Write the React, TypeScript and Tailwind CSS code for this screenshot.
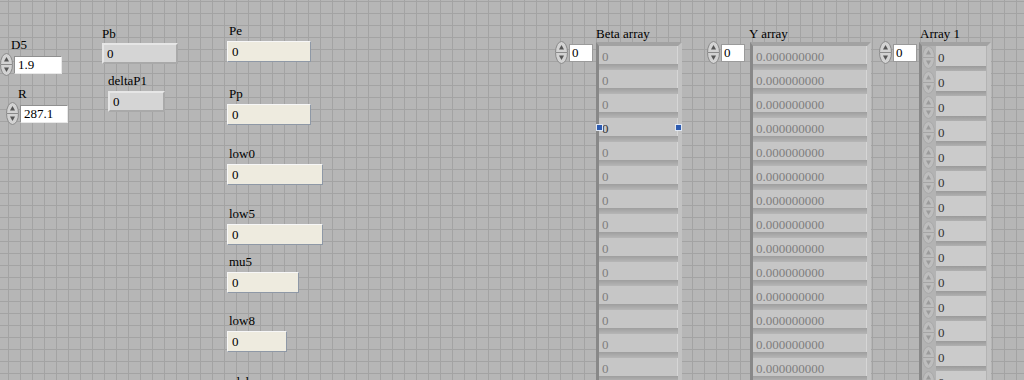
import React from 'react'

const serif = "font-['Liberation_Serif',serif]"

function Spinner({ faded = false }: { faded?: boolean }) {
  const fill = faded ? '#bdbdbd' : '#d2d2d2'
  const tri = faded ? '#9a9a9a' : '#555'
  return (
    <svg width="13" height="23" viewBox="0 0 13 23" className="shrink-0">
      <ellipse cx="6.5" cy="11.5" rx="6" ry="11" fill={fill} stroke={faded ? '#a8a8a8' : '#8a8a8a'} strokeWidth="1" />
      <line x1="1" y1="11.5" x2="12" y2="11.5" stroke={faded ? '#a5a5a5' : '#8a8a8a'} strokeWidth="1" />
      <path d="M6.5 4 L9 8.5 L4 8.5 Z" fill={tri} />
      <path d="M6.5 19 L9 14.5 L4 14.5 Z" fill={tri} />
    </svg>
  )
}

function Label({ text, className = '' }: { text: string; className?: string }) {
  return <div className={`${serif} text-[13px] leading-[14px] text-black ${className}`}>{text}</div>
}

function Control({ value, width }: { value: string; width: string }) {
  return (
    <div className="flex items-center gap-[1px]">
      <Spinner />
      <div className={`${width} h-[18px] bg-white border border-t-[#8f8f8f] border-l-[#8f8f8f] border-b-[#e8e8e8] border-r-[#e8e8e8] ${serif} text-[13px] leading-[16px] pl-[3px] text-black`}>
        {value}
      </div>
    </div>
  )
}

function GrayIndicator({ value, width }: { value: string; width: string }) {
  return (
    <div className={`${width} h-[21px] bg-[#d5d5d5] border-2 border-t-[#e6e6e6] border-l-[#e6e6e6] border-b-[#a9a9a9] border-r-[#a9a9a9] ${serif} text-[13px] leading-[17px] pl-[3px] text-black`}>
      {value}
    </div>
  )
}

function CreamIndicator({ value, width }: { value: string; width: string }) {
  return (
    <div className={`${width} h-[21px] bg-[#eeebdf] border border-t-[#f7f7f7] border-l-[#f7f7f7] border-b-[#8e98a6] border-r-[#8e98a6] ${serif} text-[13px] leading-[19px] pl-[4px] text-black`}>
      {value}
    </div>
  )
}

const rows = Array.from({ length: 14 }, (_, i) => i)

function ArrayIndex() {
  return (
    <div className="flex items-center gap-[1px]">
      <Spinner />
      <div className={`w-[24px] h-[18px] bg-white border border-[#9a9a9a] ${serif} text-[13px] leading-[16px] pl-[2px] text-black`}>0</div>
    </div>
  )
}

export default function App() {
  const fields = [
    { label: 'Pe', top: 'top-[24px]', w: 'w-[84px]' },
    { label: 'Pp', top: 'top-[87px]', w: 'w-[84px]' },
    { label: 'low0', top: 'top-[147px]', w: 'w-[96px]' },
    { label: 'low5', top: 'top-[207px]', w: 'w-[96px]' },
    { label: 'mu5', top: 'top-[255px]', w: 'w-[72px]' },
    { label: 'low8', top: 'top-[314px]', w: 'w-[60px]' },
  ]

  return (
    <div className="relative w-[1024px] h-[380px] overflow-hidden bg-[#b6b6b6] bg-[image:linear-gradient(to_right,#a3a3a3_1px,transparent_1px),linear-gradient(to_bottom,#a3a3a3_1px,transparent_1px)] bg-[size:12px_12px] bg-[position:8px_1px]">
      {/* left numerics */}
      <div className="absolute left-0 top-[38px] flex flex-col gap-[1px]">
        <Label text="D5" className="pl-[11px]" />
        <Control value="1.9" width="w-[48px]" />
      </div>
      <div className="absolute left-[6px] top-[87px] flex flex-col gap-[1px]">
        <Label text="R" className="pl-[12px]" />
        <Control value="287.1" width="w-[48px]" />
      </div>

      <div className="absolute left-[102px] top-[27px] flex flex-col gap-[2px]">
        <Label text="Pb" />
        <GrayIndicator value="0" width="w-[76px]" />
      </div>
      <div className="absolute left-[108px] top-[74px] flex flex-col gap-[3px]">
        <Label text="deltaP1" />
        <GrayIndicator value="0" width="w-[57px]" />
      </div>

      {fields.map((f) => (
        <div key={f.label} className={`absolute left-[227px] ${f.top} flex flex-col gap-[3px]`}>
          <Label text={f.label} className="pl-[2px]" />
          <CreamIndicator value="0" width={f.w} />
        </div>
      ))}
      <Label text="rdel" className="absolute left-[229px] top-[375px]" />

      {/* Beta array */}
      <Label text="Beta array" className="absolute left-[596px] top-[27px]" />
      <div className="absolute left-[555px] top-[41px]">
        <ArrayIndex />
      </div>
      <div className="absolute left-[596px] top-[42px] w-[86px] h-[360px] bg-[#b3b3b3] border-l-[3px] border-l-[#888888] border-t-[4px] border-t-[#a2a2a2] border-r-[4px] border-r-[#c2c2c2] flex flex-col">
        {rows.map((i) => (
          <div key={i} className="relative shrink-0 h-[24px] flex flex-col">
            <div className={`h-[18px] bg-[#c6c6c6] border-r border-r-[#d6d6d6] ${serif} text-[13px] leading-[15px] pt-[3px] pl-[3px] ${i === 3 ? 'text-[#333]' : 'text-[#7e7e7e]'}`}>0</div>
            <div className="h-[6px] bg-[linear-gradient(to_bottom,#9e9e9e,#b6b6b6)]" />
            {i === 3 && (
              <>
                <div className="absolute left-[-3px] top-[6px] w-[7px] h-[7px] bg-[#2d5bb0] border border-[#e0e8f4]" />
                <div className="absolute right-[-4px] top-[6px] w-[7px] h-[7px] bg-[#2d5bb0] border border-[#e0e8f4]" />
              </>
            )}
          </div>
        ))}
      </div>

      {/* Y array */}
      <Label text="Y array" className="absolute left-[749px] top-[27px]" />
      <div className="absolute left-[707px] top-[41px]">
        <ArrayIndex />
      </div>
      <div className="absolute left-[750px] top-[42px] w-[121px] h-[360px] bg-[#b3b3b3] border-l-[3px] border-l-[#888888] border-t-[4px] border-t-[#a2a2a2] border-r-[4px] border-r-[#c2c2c2] flex flex-col">
        {rows.map((i) => (
          <div key={i} className="shrink-0 h-[24px] flex flex-col">
            <div className={`h-[18px] bg-[#c6c6c6] border-r border-r-[#d6d6d6] ${serif} text-[13px] leading-[15px] pt-[3px] pl-[3px] text-[#7e7e7e]`}>0.000000000</div>
            <div className="h-[6px] bg-[linear-gradient(to_bottom,#9e9e9e,#b6b6b6)]" />
          </div>
        ))}
      </div>

      {/* Array 1 */}
      <Label text="Array 1" className="absolute left-[920px] top-[27px]" />
      <div className="absolute left-[879px] top-[41px]">
        <ArrayIndex />
      </div>
      <div className="absolute left-[919px] top-[42px] w-[72px] h-[360px] bg-[#b3b3b3] border-l-[3px] border-l-[#888888] border-t-[4px] border-t-[#a2a2a2] border-r-[4px] border-r-[#c2c2c2] flex flex-col">
        {rows.map((i) => (
          <div key={i} className="shrink-0 h-[25px] flex items-start">
            <Spinner faded />
            <div className="flex flex-col ml-[1px]">
              <div className={`w-[50px] h-[20px] bg-[#cbcbcb] ${serif} text-[13px] leading-[16px] pt-[4px] pl-[2px] text-[#333]`}>0</div>
              <div className="w-[50px] h-[5px] bg-[linear-gradient(to_bottom,#9a9a9a,#b0b0b0)]" />
            </div>
          </div>
        ))}
      </div>
    </div>
  )
}
